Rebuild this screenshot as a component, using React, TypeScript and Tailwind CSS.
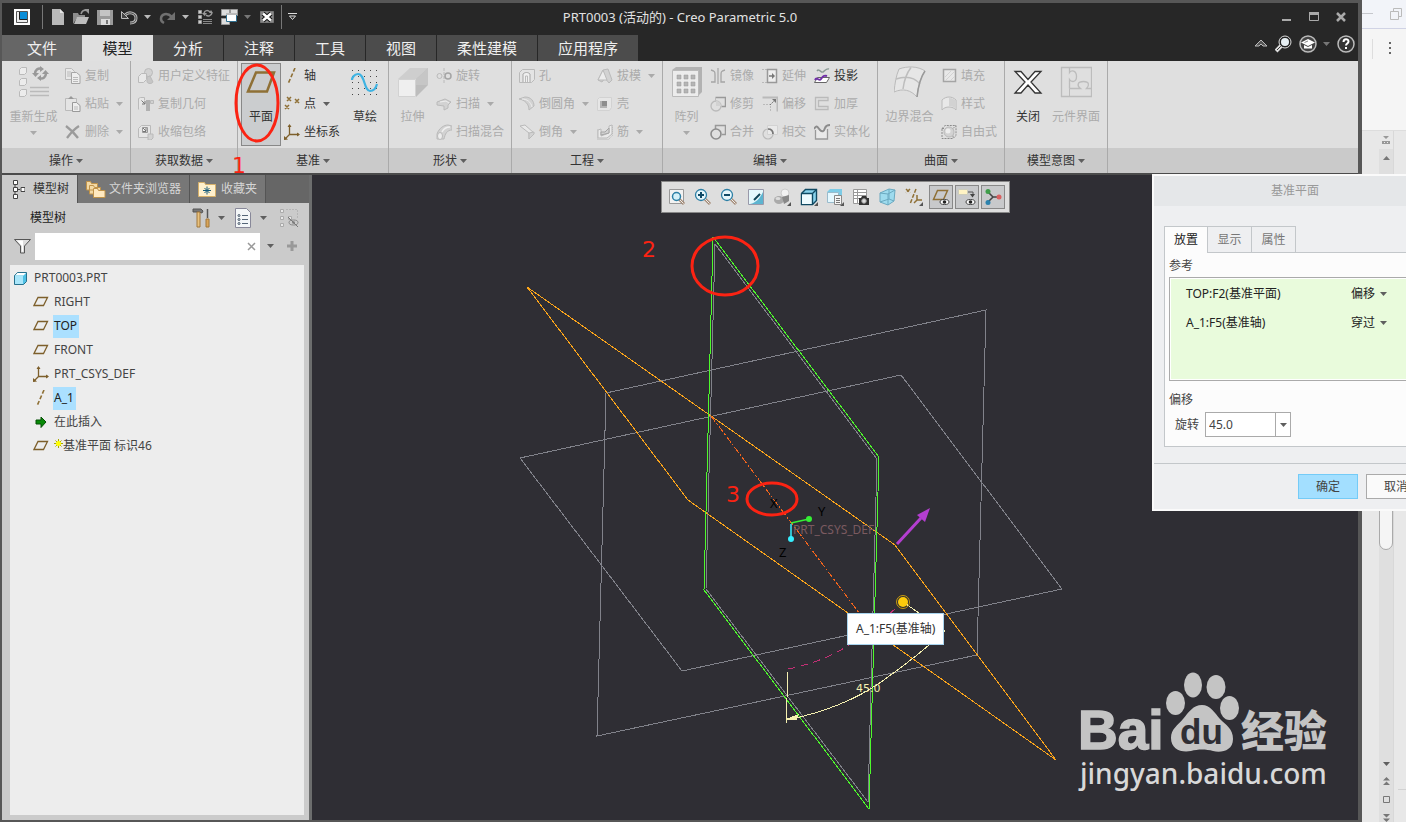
import type { ReactNode } from "react";
import clsx from "clsx";

function Svg({ w = 16, h = 16, children, className }: { w?: number; h?: number; children: ReactNode; className?: string }) {
  return (
    <svg width={w} height={h} viewBox={`0 0 ${w} ${h}`} fill="none" aria-hidden="true" className={clsx("shrink-0", className)}>
      {children}
    </svg>
  );
}

function Caret({ className = "text-[#5f5f5f]" }: { className?: string }) {
  return <Svg w={7} h={4} className={className}><path d="M0 0h7L3.5 4z" fill="currentColor" /></Svg>;
}

/* ---------- title bar ---------- */

const titleIcons = {
  logo: <Svg><path d="M0 0h16v16H0z" fill="#fff" /><path d="M2.5 2.5h11v11h-11z" fill="#eee" stroke="#555" /><path d="M6 3h7v7H6z" fill="#0b8ed8" /><path d="M5.5 3v7.5H13" stroke="#222" /></Svg>,
  new: <Svg w={14}><path d="M1 0h8l4 4v12H1z" fill="#b9b9b9" /><path d="M9 0l4 4H9z" fill="#e6e6e6" /></Svg>,
  open: <Svg><path d="M0 15V4h5l1 2h6v3H4z" fill="#8d8d8d" /><path d="M4 8h12l-3 7H1z" fill="#bdbdbd" /><path d="M8 5c1-3 3-4 5-3.500" stroke="#999" strokeWidth="1.500" /><path d="M11 0h5v5z" fill="#999" /></Svg>,
  save: <Svg><path d="M0 1h16v15H0z" fill="#9a9a9a" /><path d="M3 1h10v6H3z" fill="#c4c4c4" /><path d="M4 10h9v6H4z" fill="#dcdcdc" /><path d="M9 11h2v4H9z" fill="#777" /></Svg>,
  undo: <Svg w={17}><path d="M4 6c4-4 11-2 11 3 0 4-3 5-6 5" stroke="#b8b8b8" strokeWidth="3" /><path d="M4 6c4-4 11-2 11 3 0 4-3 5-6 5" stroke="#444" /><path d="M.5 2.500v7h7z" fill="#444" stroke="#bbb" /></Svg>,
  redo: <Svg w={17}><path d="M13 8C8 3 2 5 2 10c0 2 1 3 3 4" stroke="#707070" strokeWidth="2.500" /><path d="M16 3v8H8z" fill="#707070" /></Svg>,
  regen: <Svg><path d="M1.500 1.500h3v3h-3zM1.500 6.500h3v3h-3zM1.500 11.500h3v3h-3z" stroke="#999" fill="#ccc" /><path d="M6 10.500h9M6 12.500h9M6 14.500h9" stroke="#888" /><path d="M7 4c1-3 4-3 6-1M15 4c-1 3-4 4-6 2" stroke="#999" strokeWidth="1.500" /><path d="M5 4h5L7.500 7zM12 4h4l-2-3z" fill="#999" /></Svg>,
  window: <Svg w={17}><path d="M.5.5h8v6h-8zM9.500.5h7v6h-7zM.5 9.500h8v6h-8z" fill="#ddd" stroke="#999" /><path d="M5.500 4.500h10v8h-10z" fill="#fff" stroke="#2f6f8f" /><path d="M5 4h11v2H5z" fill="#bbb" /></Svg>,
  close: <Svg><path d="M1.500 2.500h13v11h-13z" fill="#888" stroke="#777" /><path d="M4 4.500l8 7M12 4.500l-8 7" stroke="#111" strokeWidth="4.500" /><path d="M4 4.500l8 7M12 4.500l-8 7" stroke="#fff" strokeWidth="2.500" /></Svg>,
};

function TitleBar() {
  return (
    <header className="grid h-8 grid-cols-[1fr_auto_1fr] items-center bg-[#272727] pb-1">
      <div className="flex items-center gap-2 pl-3">
        {titleIcons.logo}
        <div className="ml-1 h-6 w-px bg-[#777]" />
        <button aria-label="新建">{titleIcons.new}</button>
        <button aria-label="打开">{titleIcons.open}</button>
        <button aria-label="保存">{titleIcons.save}</button>
        <button aria-label="撤消" className="flex items-center gap-1.5">{titleIcons.undo}<Caret className="text-[#bbb]" /></button>
        <button aria-label="重做" className="flex items-center gap-1.5">{titleIcons.redo}<Caret className="text-[#bbb]" /></button>
        <button aria-label="重新生成">{titleIcons.regen}</button>
        <button aria-label="窗口" className="flex items-center gap-1.5">{titleIcons.window}<Caret className="text-[#777]" /></button>
        <div className="flex items-center gap-1.5">
          <button aria-label="关闭窗口">{titleIcons.close}</button>
          <div className="h-6 w-px bg-[#777]" />
          <button aria-label="自定义快速访问工具栏">
            <Svg w={9} h={8}><path d="M0 .5h9M1.500 3h6L4.500 6.500z" stroke="#ddd" /></Svg>
          </button>
        </div>
      </div>
      <h1 className="text-[13px] leading-5 text-[#e2e2e2]">PRT0003 (活动的) - Creo Parametric 5.0</h1>
      <div className="flex items-center justify-end gap-[17px] pr-3">
        <button aria-label="最小化"><Svg w={10} h={10}><path d="M0 8h9" stroke="#aaa" strokeWidth="2" /></Svg></button>
        <button aria-label="最大化"><Svg w={10} h={10}><path d="M.5.5h9v8h-9z" stroke="#aaa" /><path d="M0 0h10v3H0z" fill="#aaa" /></Svg></button>
        <button aria-label="关闭"><Svg w={10} h={10}><path d="M1 1l8 8M9 1L1 9" stroke="#aaa" strokeWidth="2.500" /></Svg></button>
      </div>
    </header>
  );
}

const ribbonTabs = ["分析", "注释", "工具", "视图", "柔性建模", "应用程序"];

function TabRow() {
  return (
    <nav className="flex h-[26px] bg-[#272727] text-[15px] leading-6 text-[#efefef]">
      <button className="w-20 bg-[#666]">文件</button>
      <button className="w-[71px] bg-[#e0e0e0] text-[#222]">模型</button>
      {ribbonTabs.map((tab) => (
        <button key={tab} className="border-r border-[#272727] bg-[#4c4c4c] px-5">{tab}</button>
      ))}
      <div className="ml-auto flex items-center gap-[7px] pr-[3px] pb-2">
        <button aria-label="折叠功能区"><Svg w={14} h={12}><path d="M1 8l6-6 6 6H9L7 6 5 8z" fill="#555" stroke="#bbb" /></Svg></button>
        <button aria-label="搜索">
          <Svg w={17} h={18}><path d="M1 16l5-5" stroke="#ddd" strokeWidth="4" /><path d="M2 15l4-4" stroke="#333" strokeWidth="1" /><circle cx="10" cy="7" r="6" fill="#222" stroke="#ddd" /><circle cx="10" cy="7" r="4" fill="#e6eef2" /></Svg>
        </button>
        <button aria-label="学习" className="flex items-center gap-1.5">
          <Svg w={18} h={18}><circle cx="9" cy="9" r="8" fill="#444" stroke="#bbb" strokeWidth="1.500" /><path d="M2 7.500L9 4l7 3.500L9 11z" fill="#fff" /><path d="M5 10v3.500h8V10l-4 2z" fill="#fff" /><path d="M5.500 7.500L9 6" stroke="#888" /></Svg>
          <Caret className="text-[#777]" />
        </button>
        <button aria-label="帮助">
          <Svg w={18} h={18}><circle cx="9" cy="9" r="8" fill="#333" stroke="#bbb" strokeWidth="1.500" /><path d="M6.500 7c0-3.500 5-3.500 5-.5 0 2-2.500 2-2.500 4M9 12v2" stroke="#fff" strokeWidth="2" /></Svg>
        </button>
      </div>
    </nav>
  );
}

/* ---------- ribbon icons ---------- */

const G = "#bababa";
const L = "#d2d2d2";
const BROWN = "#8f7036";

const icons: Record<string, ReactNode> = {
  copy: <Svg><path d="M.5.500h6l3 3v8h-9z" fill="#e8e8e8" stroke={G} /><path d="M2 4h4M2 6h4M2 8h4" stroke={G} /><path d="M6.500 4.500h5l3.500 3v8H6.500z" fill="#eee" stroke="#a5a5a5" /><path d="M8 9.500h5M8 11.500h5M8 13.500h5" stroke={G} /></Svg>,
  paste: <Svg><path d="M.5 2.500h11v12H.5z" fill="#e4e4e4" stroke={G} /><path d="M3 3l3-3 3 3z" fill="#999" /><path d="M7.500 6.500h4l3.500 3v6H7.500z" fill="#eee" stroke="#999" /><path d="M9 11h4M9 13h4" stroke={G} /></Svg>,
  delete: <Svg><path d="M1 2c4 3 9 8 12 12M14 2C9 5 5 10 2 14" stroke="#9b9b9b" strokeWidth="2.300" /></Svg>,
  udf: <Svg><circle cx="10.500" cy="4.500" r="4" fill={L} stroke={G} /><path d="M12 8l3 6c-1 2-5 2-6 0V9z" fill="#c6c6c6" stroke={G} /><path d="M.5 8.500l3-3h5v6l-3 3h-5z" fill="#e8e8e8" stroke={G} /></Svg>,
  copyGeom: <Svg><path d="M.5 13.500V2.500l2-1h4v3" fill="#e6e6e6" stroke={G} /><path d="M3.500 4.500l3.500 3.500M7 5v3H4" stroke="#777" /><path d="M8 4h4v11H8z" fill="#b0b0b0" /><path d="M12.500 4.500h3v3h-3z" fill={L} stroke={G} /></Svg>,
  shrink: <Svg><path d="M.5 4.500l3-3h9v9l-2 3H.5z" fill="#e6e6e6" stroke={G} /><path d="M4.500 3.500h5v5h-5z" fill="#eee" stroke="#999" /><path d="M5 4l3 3M8 4v3.500H5" stroke="#777" /><path d="M10 10h5v4l-2 2h-3z" fill={L} stroke={G} /></Svg>,
  axis: <Svg><path d="M11 0L4 16" stroke={BROWN} strokeWidth="1.600" strokeDasharray="4 2" /></Svg>,
  point: <Svg><path d="M3 1l4 4M7 1L3 5M11 3l4 4M15 3l-4 4M1 9l4 4M5 9l-4 4" stroke={BROWN} strokeWidth="1.500" /></Svg>,
  csys: <Svg><path d="M5.500 1v9.500H15M5.500 10.500L1 15" stroke="#7d5f2b" strokeWidth="1.300" /><path d="M3.500 3l2-3 2 3zM13 8.500l3 2-3 2zM0 16v-4l4 3.500z" fill="#7d5f2b" /></Svg>,
  revolve: <Svg><path d="M8 0v16" stroke={G} strokeDasharray="3 1" /><circle cx="3.500" cy="8" r="2.500" stroke={G} /><circle cx="12" cy="8" r="3" stroke="#a5a5a5" strokeWidth="1.500" /></Svg>,
  sweep: <Svg><path d="M1 6l8-3 6 3-3 3v3l-4 2v-4l-7-1z" fill={L} stroke={G} /><path d="M4 6l6-1 3 2" stroke="#eee" /></Svg>,
  sweptBlend: <Svg><path d="M1 10C3 4 8 1 12 1l4 1v4c-5 0-7 4-8 9H1z" fill={L} stroke={G} /><ellipse cx="4" cy="12" rx="2.500" ry="3.500" fill="#ededed" stroke={G} /><path d="M6 8c2-4 5-5 8-5" stroke="#f0f0f0" strokeWidth="1.500" /></Svg>,
  hole: <Svg><path d="M.5 4.500l3-3h12v10l-3 3H.5z" fill="#e4e4e4" stroke={G} /><path d="M4 14V6c2-2 5-2 7 0v8" fill="#f0f0f0" stroke="#a5a5a5" /><path d="M6.500 14V8h2v6" stroke={G} /></Svg>,
  round: <Svg><path d="M0 3l6-2c6 0 9 4 9 9l-5 4C10 8 6 4 0 3z" fill={L} stroke={G} /><path d="M3 3c5 0 9 3 10 8" stroke="#eee" /></Svg>,
  chamfer: <Svg><path d="M1 2l5-1 9 8-5 6V9z" fill="#e8e8e8" stroke={G} /><path d="M10 9v6l5-5V8z" fill={L} stroke={G} /></Svg>,
  draft: <Svg><path d="M1 12L6 2l5-1 4 11-3 3-4-5-3 4z" fill={L} stroke={G} /><path d="M6 2l4 10H1z" fill="#ececec" stroke={G} /></Svg>,
  shell: <Svg><path d="M.5 3.500l2-2h12v10l-2 3H.5z" fill="#e6e6e6" stroke={L} /><path d="M3 5h7v7H3z" fill="#b4b4b4" /><path d="M5 5h5v5H5z" fill="#8e8e8e" /></Svg>,
  rib: <Svg><path d="M.5 5.500v10h11l4-4v-10" stroke={G} strokeDasharray="1 1" /><path d="M4 12l8-3V2l3-1v9l-5 4H1V6l3-1z" fill="#eaeaea" stroke={G} /><path d="M4 11l8-2V4L8 8H4z" fill={L} stroke="#a5a5a5" /></Svg>,
  mirror: <Svg><path d="M8 0v16" stroke="#999" /><path d="M1 2c4 1 4 2 4 5v7H1M15 2c-4 1-4 2-4 5v7h4" stroke="#a5a5a5" strokeWidth="1.300" /></Svg>,
  trim: <Svg><path d="M5.500 1.500h10v9h-4" stroke="#999" strokeWidth="1.500" /><path d="M5.500 1.500v3" stroke={G} /><circle cx="6" cy="10" r="5" stroke={G} strokeWidth="1.300" /><path d="M6 5c3 0 5 2 5 5H6z" fill={L} /></Svg>,
  merge: <Svg><path d="M5.500 5V1.500h10v9H12" stroke="#999" strokeWidth="1.500" /><circle cx="6" cy="10" r="5" stroke="#8c8c8c" strokeWidth="1.600" /></Svg>,
  extend: <Svg><path d="M0 1.500h5M0 14.500h5" stroke={G} strokeDasharray="2 1" /><path d="M5.500 1.500h9v13h-9z" fill="#eee" stroke="#999" strokeWidth="1.500" /><path d="M7 8h3" stroke="#777" strokeWidth="1.500" /><path d="M10 5l3 3-3 3z" fill="#777" /></Svg>,
  offset: <Svg><path d="M.5 1.500h15v14" stroke={G} strokeWidth="2" /><path d="M1 8.500h7.500V16" stroke={G} strokeDasharray="2 1" /><path d="M8 9l5-5" stroke="#777" strokeDasharray="2 1" /><path d="M10 3h4v4z" fill="#777" /></Svg>,
  intersect: <Svg><path d="M5.500 1.500h10v9h-10z" fill="#e9e9e9" stroke={L} /><circle cx="6" cy="10" r="5" stroke={G} strokeWidth="1.200" /><path d="M6 5c3 0 5 2 5 5" stroke="#777" strokeWidth="1.700" /></Svg>,
  project: <Svg><path d="M3 3c2-3 4 2 6 1s3-4 6-3" stroke="#8a9a95" strokeWidth="1.400" /><path d="M.5 14.500l3-5h12l-3 5z" fill="#fff" stroke="#666" /><path d="M1 12c2-4 4 2 6-1s3-4 6-3" stroke="#7130a8" strokeWidth="2" /></Svg>,
  thicken: <Svg><path d="M14 4.500V1.500H1.500v12H14v-3H4.500v-6z" stroke={G} strokeWidth="1.300" /></Svg>,
  solidify: <Svg><path d="M1.500 6v9h12V5" fill="#e9e9e9" stroke="#999" strokeWidth="1.300" /><path d="M0 5c3-5 4-1 6 1s4 2 5-2c1-3 3-3 5-3" stroke="#8c8c8c" strokeWidth="2" /></Svg>,
  fill: <Svg><path d="M2.500 1.500h12v12h-12z" fill="#e8e8e8" stroke="#a5a5a5" strokeWidth="1.500" /><path d="M4 9l6-6M4 13l10-10M9 13l5-5" stroke={L} /></Svg>,
  style: <Svg><path d="M1 4c4-4 10-4 14 0v10c-3-4-11-4-14 0z" fill="#e8e8e8" stroke={G} /><path d="M8 2c4 0 6 2 7 3v8c-2-2-4-3-7-3z" fill={L} /></Svg>,
  freestyle: <Svg><path d="M1 4.500l3-3h11v10l-3 3H1zM1 4.500h11v10M12 4.500l3-3" stroke="#8c8c8c" strokeDasharray="2 1" /><circle cx="8" cy="8" r="5" fill={L} stroke={G} /><circle cx="7" cy="7" r="2.500" fill="#ededed" /></Svg>,
};

const bigIcons: Record<string, ReactNode> = {
  regenerate: <Svg w={30} h={32}><path d="M.5 3.500l2-2h5v5l-2 2h-5zM.5 14.500l2-2h5v5l-2 2h-5zM.5 25.500l2-2h5v5l-2 2h-5z" fill="#ececec" stroke={G} /><path d="M11 21.500h19M11 25.500h19M11 29.500h19" stroke={G} strokeWidth="1.500" /><path d="M16 8c0-4 3-6 6-5.500M27 7c0 4-3 6-6 5.500" stroke="#999" strokeWidth="2.500" /><path d="M13 7h7l-3.500 4zM23 8h7l-3.500-4zM21 0l4 3-4 3zM22 9l-4 3 4 3z" fill="#999" /></Svg>,
  plane: <Svg w={30} h={32}><path d="M10 6.500h18l-7 19H2z" stroke={BROWN} strokeWidth="2.500" /></Svg>,
  sketch: (
    <Svg w={30} h={32}>
      {[4, 10, 16, 22, 28].map((y) => <path key={y} d={`M2 ${y}.500h26`} stroke="#444" strokeDasharray="1 5" />)}
      <path d="M2 14c0-2 2-6 6-6 7 0 6 17 12 17 4 0 6-3 7-7" stroke="#3fb3e2" strokeWidth="2.200" />
    </Svg>
  ),
  extrude: <Svg w={30} h={32}><path d="M12 2h18L18 13H0z" fill="#cecece" /><path d="M30 2v17L18 31V13z" fill="#bdbdbd" /><path d="M18 13L30 2v17H18z" fill="#c6c6c6" /><path d="M.5 13.500h17v17H.5z" fill="#efefef" stroke={L} /></Svg>,
  pattern: (
    <Svg w={30} h={32}>
      <path d="M0 4l4-3h26v25l-4 4z" fill="#b2b2b2" />
      <path d="M.5 4.500h26v26H.5z" fill="#ececec" stroke={G} />
      {[9, 16, 23].map((y) => [5, 12, 19].map((x) => <path key={`${x}-${y}`} d={`M${x} ${y}h4v4h-4z`} fill="#b5b5b5" stroke="#999" strokeWidth=".5" />))}
    </Svg>
  ),
  boundary: <Svg w={32} h={32}><path d="M5 3C13 0 24 0 31 5c-5 7-7 17-8 26-6-7-14-9-23-5 1-9 2-16 5-23z" fill="#e6e6e6" stroke={G} /><path d="M17 1.500C12 8 10 15 9 23M2 13c9-3 18-2 24 5" stroke="#bdbdbd" strokeWidth="1.500" /><path d="M31 5c-5 7-7 17-8 26" stroke="#999" strokeWidth="1.500" /></Svg>,
  closeX: <Svg w={30} h={32}><path d="M2 5.500h6l7 8 7-8h6L18 16l10 11h-6l-7-8-7 8H2l10-11z" fill="#fff" stroke="#333" strokeWidth="1.300" /></Svg>,
  component: <Svg w={32} h={32}><path d="M1.500 1.500h30v29h-30z" stroke="#bcbcbc" strokeWidth="1.300" /><path d="M9.500 1.500v5c2-3 7-2 7 4s-5 6-7 3v9M9.500 22.500h11c-4-3-3-7 3-7s6 4 3 7h5" stroke="#bcbcbc" strokeWidth="1.300" /><path d="M9.500 22.500v8" stroke="#bcbcbc" /></Svg>,
};

type Item = { icon: string; label: string; menu?: boolean; on?: boolean };

function Big({ icon, label, menu, on, className }: Item & { className: string }) {
  return (
    <button disabled={!on} className={clsx("flex shrink-0 flex-col items-center", on ? "text-[#333]" : "text-[#ababab]", className)}>
      {bigIcons[icon]}
      <span className="mt-[9px] leading-5 whitespace-nowrap">{label}</span>
      {menu && <Caret className="mt-1 text-[#aaa]" />}
    </button>
  );
}

function Column({ items, className = "" }: { items: Item[]; className?: string }) {
  return (
    <div className={clsx("flex shrink-0 flex-col pt-px", className)}>
      {items.map((item) => (
        <button key={item.label} disabled={!item.on} className={clsx("flex h-7 items-center gap-1 whitespace-nowrap", item.on ? "text-[#333]" : "text-[#ababab]")}>
          {icons[item.icon]}
          <span>{item.label}</span>
          {item.menu && <Caret className={clsx("ml-[3px]", item.on ? "text-[#5f5f5f]" : "text-[#aaa]")} />}
        </button>
      ))}
    </div>
  );
}

function Group({ label, className, children }: { label: string; className: string; children: ReactNode }) {
  return (
    <section className={clsx("relative flex shrink-0 flex-col border-r border-[#aaa]", className)}>
      <div className="flex h-[87px]">{children}</div>
      <button className="flex h-[25px] items-center justify-center gap-[3px] bg-[#cacaca] text-[#333]">{label}<Caret /></button>
    </section>
  );
}

function Ribbon() {
  return (
    <div className="flex border-b-2 border-[#4b4b4b] bg-[#dfdfdf] text-xs">
      <Group label="操作" className="w-[129px]">
        <Big icon="regenerate" label="重新生成" menu className="w-[63px] pt-[5px]" />
        <Column items={[{ icon: "copy", label: "复制" }, { icon: "paste", label: "粘贴", menu: true }, { icon: "delete", label: "删除", menu: true }]} />
      </Group>
      <Group label="获取数据" className="w-[107px]">
        <Column className="pl-[7px]" items={[{ icon: "udf", label: "用户定义特征" }, { icon: "copyGeom", label: "复制几何" }, { icon: "shrink", label: "收缩包络" }]} />
      </Group>
      <Group label="基准" className="w-[151px]">
        <div className="flex px-[3px] py-0.5">
          <Big icon="plane" label="平面" on className="w-10 border border-[#888] bg-[#cbcdcf] pt-0.5" />
        </div>
        <Column className="w-[58px]" items={[{ icon: "axis", label: "轴", on: true }, { icon: "point", label: "点", menu: true, on: true }, { icon: "csys", label: "坐标系", on: true }]} />
        <Big icon="sketch" label="草绘" on className="w-[46px] pt-[5px]" />
        <svg width="56" height="116" viewBox="0 0 56 116" className="pointer-events-none absolute top-0 -left-2 z-10" fill="none">
          <ellipse cx="27" cy="42" rx="21" ry="38" stroke="#fb2313" strokeWidth="3" />
          <text x="2" y="112" fill="#fb2313" fontSize="22" fontFamily="DejaVu Sans, sans-serif">1</text>
        </svg>
      </Group>
      <Group label="形状" className="w-[123px]">
        <Big icon="extrude" label="拉伸" className="w-[47px] pt-[5px]" />
        <Column items={[{ icon: "revolve", label: "旋转" }, { icon: "sweep", label: "扫描", menu: true }, { icon: "sweptBlend", label: "扫描混合" }]} />
      </Group>
      <Group label="工程" className="w-[151px]">
        <Column className="w-[85px] pl-[7px]" items={[{ icon: "hole", label: "孔" }, { icon: "round", label: "倒圆角", menu: true }, { icon: "chamfer", label: "倒角", menu: true }]} />
        <Column items={[{ icon: "draft", label: "拔模", menu: true }, { icon: "shell", label: "壳" }, { icon: "rib", label: "筋", menu: true }]} />
      </Group>
      <Group label="编辑" className="w-[215px]">
        <Big icon="pattern" label="阵列" menu className="w-[47px] pt-[5px]" />
        <Column className="w-[52px]" items={[{ icon: "mirror", label: "镜像" }, { icon: "trim", label: "修剪" }, { icon: "merge", label: "合并" }]} />
        <Column className="w-[52px]" items={[{ icon: "extend", label: "延伸" }, { icon: "offset", label: "偏移" }, { icon: "intersect", label: "相交" }]} />
        <Column items={[{ icon: "project", label: "投影", on: true }, { icon: "thicken", label: "加厚" }, { icon: "solidify", label: "实体化" }]} />
      </Group>
      <Group label="曲面" className="w-[127px]">
        <Big icon="boundary" label="边界混合" className="w-[63px] pt-[5px]" />
        <Column items={[{ icon: "fill", label: "填充" }, { icon: "style", label: "样式" }, { icon: "freestyle", label: "自由式" }]} />
      </Group>
      <Group label="模型意图" className="w-[103px]">
        <Big icon="closeX" label="关闭" on className="w-[46px] pt-[5px]" />
        <Big icon="component" label="元件界面" className="w-[50px] pt-[5px]" />
      </Group>
      <div className="flex flex-1 flex-col justify-end"><div className="h-[25px] bg-[#cacaca]" /></div>
    </div>
  );
}

/* ---------- model tree ---------- */

const planeIcon = <Svg><path d="M5 3.500h9.500l-4 8H1z" stroke="#7d5f2b" strokeWidth="1.300" /></Svg>;

const treeItems: { icon: ReactNode; label: string; selected?: boolean; fresh?: boolean }[] = [
  { icon: planeIcon, label: "RIGHT" },
  { icon: planeIcon, label: "TOP", selected: true },
  { icon: planeIcon, label: "FRONT" },
  { icon: icons.csys, label: "PRT_CSYS_DEF" },
  { icon: icons.axis, label: "A_1", selected: true },
  { icon: <Svg><path d="M3 6h5V3l5 5-5 5.500V10H3z" fill="#088a08" stroke="#045004" /></Svg>, label: "在此插入" },
  { icon: planeIcon, label: "基准平面 标识46", fresh: true },
];

function Sidebar() {
  return (
    <aside className="flex w-[310px] shrink-0 flex-col border-r-[3px] border-[#6c6d6d] bg-[#cbcbcb] text-xs">
      <div className="flex h-7 bg-[#666] text-[#d5d5d5]">
        <button className="flex w-[76px] items-center gap-2 border-r border-[#555] bg-[#cbcbcb] pl-2 text-[#333]">
          <Svg w={15} h={20}><path d="M5 4v13M5 10.500h5" stroke="#444" /><path d="M3.500 1.500h4v4h-4zM3.500 8.500h4v4h-4zM3.500 15.500h4v4h-4zM11 8.500h4v4h-4z" fill="#fff" stroke="#444" /></Svg>
          模型树
        </button>
        <button className="flex w-28 items-center gap-[3px] border-r border-[#555] bg-[#777] pl-2">
          <Svg w={20} h={20}>
            <path d="M.5 11V2.500h4l1 2h6V11zM3.500 15V6.500h4l1 2h6V15z" fill="#f3d9a5" stroke="#c0934a" />
            <path d="M7.500 18.500v-9h4l1 2h6.500v7z" fill="#ffe9c0" stroke="#c0934a" />
          </Svg>
          文件夹浏览器
        </button>
        <button className="flex w-[76px] items-center gap-[5px] border-r border-[#555] bg-[#777] pl-2">
          <Svg w={18} h={18}><path d="M.5 16.500v-14h6l1 2h10v12z" fill="#fff0cd" stroke="#d6b06a" /><path d="M9 6.500v8M5 10.500h8M6.500 8l5 5M11.500 8l-5 5" stroke="#175b7a" /></Svg>
          收藏夹
        </button>
      </div>
      <div className="flex h-[29px] items-center pr-2.5 pl-7">
        <h2 className="text-[#222]">模型树</h2>
        <div className="ml-auto flex items-center gap-2">
          <button aria-label="设置" className="flex items-center gap-2">
            <Svg w={18} h={20}><path d="M1 1h8l2 2-1 2-3-1H1z" fill="#777" stroke="#555" /><path d="M5 4h3v15H5z" fill="#e9c27e" stroke="#a0763a" /><path d="M15.500 1v9" stroke="#555" strokeWidth="1.500" /><path d="M14 11h3v8h-3z" fill="#d9a55a" stroke="#a0763a" /></Svg>
            <Caret />
          </button>
          <button aria-label="显示" className="ml-0.5 flex items-center gap-2">
            <Svg w={17} h={20}><path d="M.5.5h11l4 4v15H.5z" fill="#f4f7f8" stroke="#889" /><path d="M7 7.500h6M7 11.500h6M7 15.500h6" stroke="#567" /><circle cx="4" cy="7.500" r="1" stroke="#456" /><circle cx="4" cy="11.500" r="1" stroke="#456" /><circle cx="4" cy="15.500" r="1" stroke="#456" /></Svg>
            <Caret />
          </button>
          <button aria-label="隐藏列" disabled className="ml-1">
            <Svg w={20} h={20}><path d="M1.500 1.500h3v3h-3zM1.500 8.500h3v3h-3zM1.500 15.500h3v3h-3zM9.500 8.500h3v3h-3z" fill="#e8e8e8" stroke="#aaa" /><path d="M7 1.500h11.500V11" stroke="#b5b5b5" strokeDasharray="2 1" /><ellipse cx="14.500" cy="14.500" rx="4.500" ry="2.500" stroke="#888" /><circle cx="14.500" cy="14.500" r="1.300" fill="#777" /><path d="M9 9l10 10" stroke="#777" /></Svg>
          </button>
        </div>
      </div>
      <div className="flex h-7 items-center pl-3">
        <Svg w={17} h={16}><path d="M.5 1.500h16L10.500 8v7h-4V8z" fill="#ddd" stroke="#555" /><path d="M3 2.500h6v11H8V8z" fill="#fff" /></Svg>
        <label className="ml-1 flex h-[27px] w-[225px] items-center bg-white pr-1">
          <input type="text" aria-label="筛选模型树" className="h-full min-w-0 flex-1 bg-transparent px-1 outline-none" />
          <Svg w={9} h={9}><path d="M1 1l7 7M8 1L1 8" stroke="#999" strokeWidth="1.500" /></Svg>
        </label>
        <button aria-label="筛选选项" className="ml-[7px]"><Caret /></button>
        <button aria-label="添加" className="ml-3"><Svg w={12} h={12}><path d="M6 1v10M1 6h10" stroke="#999" strokeWidth="3" /></Svg></button>
      </div>
      <div className="mx-2 mt-[5px] mr-[5px] mb-[5px] flex-1 bg-[#ededed] pt-px text-[#444]">
        <div className="flex h-6 items-center gap-[7px] pl-1">
          <Svg w={13} h={13}><path d="M.5 3.500l3-3h9v9l-3 3h-9z" fill="#4fc0e4" stroke="#27718d" /><path d="M1 4h8v8H1z" fill="#a9e6fa" /><path d="M1 3.500l2.500-2.500H12L9.500 3.500z" fill="#fff" /></Svg>
          PRT0003.PRT
        </div>
        <ul>
          {treeItems.map((item) => (
            <li key={item.label} className="flex h-6 items-center gap-1 pl-[23px]">
              {item.icon}
              <span className={clsx("flex h-[23px] items-center px-px", item.selected && "bg-[#abe0ff] pr-0.5 text-[#222]")}>
                {item.fresh && <Svg w={9} h={16}><path d="M4.500 1v9M0 5.500h9M1.500 2.500l6 6M7.500 2.500l-6 6" stroke="#a8a800" /><circle cx="4.500" cy="5.500" r="2.500" fill="#ff0" /></Svg>}
                {item.label}
              </span>
            </li>
          ))}
        </ul>
      </div>
    </aside>
  );
}

/* ---------- graphics window ---------- */

const corner = <path d="M18 14v4h-4z" fill="#555" />;
const eye = <><ellipse cx="12.500" cy="14" rx="4.500" ry="2.500" fill="#fff" stroke="#444" /><circle cx="12.500" cy="14" r="1.800" fill="#222" /></>;
const glass = <><path d="M11 11l5 5" stroke="#a58c78" strokeWidth="3" /><path d="M11 11l4.500 4.500" stroke="#eee" /></>;

const viewTools: { label: string; pressed?: boolean; art: ReactNode }[] = [
  { label: "重新调整", art: <><path d="M1.500 1.500h14v14h-14z" fill="#f2f2f2" stroke="#999" />{glass}<circle cx="8.500" cy="8.500" r="4" fill="#d5f0f8" stroke="#2d7fa5" strokeWidth="1.500" /></> },
  { label: "放大", art: <>{glass}<circle cx="7" cy="7" r="5.500" fill="#e6f6fb" stroke="#2d7fa5" strokeWidth="1.300" /><path d="M7 4v6M4 7h6" stroke="#114a66" strokeWidth="2" /></> },
  { label: "缩小", art: <>{glass}<circle cx="7" cy="7" r="5.500" fill="#e6f6fb" stroke="#2d7fa5" strokeWidth="1.300" /><path d="M4 7h6" stroke="#114a66" strokeWidth="2" /></> },
  { label: "重画", art: <><path d="M1.500 1.500h15v15h-15z" fill="#e5f8fc" stroke="#99a" /><path d="M3 16c6-1 10-6 13-12v12z" fill="#5cb4d0" /><path d="M7 12l6-6" stroke="#145" strokeWidth="2" /></> },
  { label: "着色", art: <><path d="M7 3l3-2h5l1 6-4 3H7z" fill="#ddd" /><circle cx="12" cy="5" r="4" fill="#f2f2f2" stroke="#ccc" /><ellipse cx="6" cy="12" rx="5" ry="4" fill="#aaa" /><path d="M9 9l7-2v6l-5 3z" fill="#888" /><ellipse cx="5" cy="10.500" rx="2.500" ry="1.500" fill="#ddd" />{corner}</> },
  { label: "显示样式", art: <><path d="M1.500 5.500l4-4h11v11l-4 4h-11z" fill="#8ad3ec" stroke="#104a63" strokeWidth="1.400" /><path d="M2 6h10v10H2z" fill="#eefbff" /><path d="M1.500 5.500h11v11M12.500 5.500l4-4" stroke="#104a63" strokeWidth="1.400" />{corner}</> },
  { label: "已保存方向", art: <><path d="M1 4l3-3h12v8L13 13H1z" fill="#7ccbe6" /><path d="M1.500 4.500h11v10h-11z" fill="#e5f8ff" stroke="#9bc" /><path d="M8.500 7.500h7v9h-7z" fill="#f5f5f5" stroke="#888" /><path d="M10 10.500h4M10 12.500h4M10 14.500h4" stroke="#777" />{corner}</> },
  { label: "视图管理器", art: <><path d="M1.500 1.500h13v14h-13zM5.500 1.500v14M1.500 4.500h13M1.500 7.500h13M1.500 10.500h13" fill="#fff" stroke="#999" /><path d="M7 10h2l1-2h4l1 2h2v7H7z" fill="#333" /><circle cx="12" cy="13" r="2.300" fill="#ddd" stroke="#999" /></> },
  { label: "透视图", art: <><path d="M1 5l9-4 6 1-1 11-6 4-8-3z" fill="#9edbee" stroke="#6ba9c0" /><path d="M1 5l8 1 7-4M9 6v11M10 1v10l-9 3M10 11l5 2" stroke="#6ba9c0" /></> },
  { label: "基准显示过滤器", art: <><path d="M1 1l4 4M5 1L1 5M11 1L5 16" stroke={BROWN} strokeWidth="1.500" strokeDasharray="4 1.500" /><path d="M12 7v5h5M12 12l-3 3" stroke={BROWN} strokeWidth="1.500" />{corner}</> },
  { label: "平面显示", pressed: true, art: <><path d="M5.500 2.500h10l-4 9H1.500z" stroke={BROWN} strokeWidth="1.500" />{eye}</> },
  { label: "注释显示", pressed: true, art: <><path d="M.5 1.500h9v5h-9z" fill="#fff3c4" stroke="#ccb" /><path d="M10 4h5v3" stroke="#555" /><path d="M12 6h5l-2.500 3.500z" fill="#444" />{eye}</> },
  { label: "旋转中心", pressed: true, art: <><path d="M4 4l5 5-5 5M9 9h6" stroke="#444" strokeWidth="1.500" /><circle cx="4" cy="3.500" r="2.500" fill="#3f9d4a" /><circle cx="4" cy="14.500" r="2.500" fill="#2c82ad" /><circle cx="15" cy="9" r="2.500" fill="#d96060" /></> },
];

function ModelView() {
  return (
    <svg width="1046" height="645" viewBox="312 175 1046 645" fill="none" className="absolute top-0 left-0" role="img" aria-label="三维模型视图">
      <g strokeWidth="1" shapeRendering="crispEdges">
        <g stroke="#81828a">
          <path d="M606 393L986 310L977 655L597 736Z" />
          <path d="M520 458L901 375L1062 589L682 671Z" />
          <path d="M715 244L877 459L868 802L706 589Z" />
        </g>
        <path d="M527 287L895 545L1056 760L688 500Z" stroke="#fba41a" />
        <path d="M713 237L879 457L869 809L704 590Z" stroke="#4df92b" />
        <path d="M711 416L866 622" stroke="#f2641c" strokeDasharray="7 2 2 2" />
      </g>

      <text x="793" y="534" fontSize="12" fill="#7b5a60">PRT_CSYS_DEF</text>
      <path d="M791 524v15" stroke="#36efff" strokeWidth="1.500" />
      <path d="M791 523l18-4" stroke="#35ef35" strokeWidth="1.500" />
      <circle cx="809" cy="519" r="3" fill="#35ef35" />
      <circle cx="791" cy="539" r="3" fill="#36efff" />
      <g fill="#000" fontSize="13"><text x="770" y="508">X</text><text x="818" y="516">Y</text><text x="779" y="557">Z</text></g>

      <path d="M897 544L921 518" stroke="#b43ed0" strokeWidth="3" />
      <path d="M930 508l-5 14-8-7z" fill="#b43ed0" />

      <g shapeRendering="crispEdges">
        <path d="M788 669Q823 662 849 645T897 607" stroke="#c22f74" strokeDasharray="7 6" />
        <g stroke="#f4efb0">
          <path d="M788 672L786 724" />
          <path d="M903 602L945 631Q918 656 881 682T787 720" />
          <path d="M787 719l11-4-2 5z" fill="#f4efb0" />
        </g>
      </g>
      <circle cx="903" cy="602" r="6.500" stroke="#c89b10" />
      <circle cx="903" cy="602" r="5" fill="#fccb0c" />
      <text x="856" y="692" fontSize="11" fill="#f4efb0" fontFamily="DejaVu Sans, sans-serif">45.0</text>

      <g stroke="#fb2313" strokeWidth="3">
        <ellipse cx="725" cy="266" rx="33" ry="29" />
        <ellipse cx="772" cy="499" rx="25" ry="16" />
      </g>
      <g fill="#fb2313" fontSize="22" fontFamily="DejaVu Sans, sans-serif"><text x="642" y="257">2</text><text x="726" y="502">3</text></g>

      <g fill="#c4c4c4">
        <text x="1078" y="749" fontSize="55" fontWeight="700" stroke="#c4c4c4" strokeWidth="1.500" fontFamily="Liberation Sans, sans-serif">Bai</text>
        <ellipse cx="1175.500" cy="703" rx="9.500" ry="12" />
        <ellipse cx="1193" cy="685" rx="9" ry="12.500" />
        <ellipse cx="1216" cy="687" rx="9.500" ry="12" />
        <ellipse cx="1229.500" cy="708" rx="9.500" ry="12" />
        <path d="M1202 705c8 0 13 8 18 14 6 6 13 10 13 20 0 12-12 14-20 12-7-2-15-2-22 0-10 2-20-2-20-13 0-9 7-13 12-19 6-7 10-14 19-14z" />
        <text x="1241" y="747" fontSize="43" fontWeight="900" fontFamily="Noto Sans CJK SC, sans-serif">经验</text>
        <text x="1080" y="784" fontSize="28" fontWeight="500" fill="#d8d8d8">jingyan.baidu.com</text>
      </g>
      <text x="1180" y="744" fontSize="35" fontWeight="700" fill="#2f2e34" fontFamily="Liberation Sans, sans-serif">du</text>
    </svg>
  );
}

function Canvas() {
  return (
    <main className="relative min-w-0 flex-1 overflow-hidden bg-[#2f2e34]">
      <ModelView />
      <div className="relative flex justify-center pt-1.5">
        <div className="flex h-8 w-[349px] items-center justify-between border border-[#888] bg-[#dedede] px-[3px]">
          {viewTools.map((tool) => (
            <button key={tool.label} aria-label={tool.label} className={clsx("grid size-6 place-items-center", tool.pressed && "border border-[#888] bg-[#c8c9cb]")}>
              <Svg w={18} h={18}>{tool.art}</Svg>
            </button>
          ))}
        </div>
      </div>
      <div role="tooltip" className="absolute top-[438px] left-[535px] flex h-8 items-center border border-[#a8d4ee] bg-white px-2 text-xs text-[#333]">A_1:F5(基准轴)</div>
    </main>
  );
}

/* ---------- datum plane dialog ---------- */

const references = [
  { name: "TOP:F2(基准平面)", type: "偏移" },
  { name: "A_1:F5(基准轴)", type: "穿过" },
];

function DatumDialog() {
  return (
    <div className="absolute top-[174px] right-0 z-20 w-[254px] overflow-hidden text-xs text-[#444]">
      <div role="dialog" aria-label="基准平面" className="w-[286px] border-2 border-[#fafafa] bg-[#eeeff1]">
        <h2 className="h-[30px] bg-[#e5e7e9] text-center leading-[30px] text-[#999]">基准平面</h2>
        <div className="mt-5 px-2.5">
          <div className="flex text-[#777]">
            <button className="z-10 h-[27px] w-11 border border-b-0 border-[#c3c7ca] bg-[#fcfcfc] text-[#222]">放置</button>
            <button className="h-[26px] w-11 border-t border-r border-[#c3c7ca]">显示</button>
            <button className="h-[26px] w-11 border-t border-r border-[#c3c7ca]">属性</button>
          </div>
          <div className="-mt-px h-[195px] border border-[#c3c7ca] bg-[#fcfcfc] pt-[3px] pl-1">
            <p className="leading-5">参考</p>
            <div className="mt-px h-[104px] border border-[#aaa] bg-white p-px">
              <div className="h-full bg-[#e9fbdc] pl-[15px] text-[#222]">
                {references.map((ref) => (
                  <div key={ref.name} className="flex h-[29px] items-center">
                    <span className="w-[165px]">{ref.name}</span>
                    <span className="relative flex items-center">
                      <select aria-label={ref.name} defaultValue={ref.type} className="w-10 appearance-none bg-transparent outline-none">
                        <option>{ref.type}</option>
                      </select>
                      <span className="pointer-events-none absolute right-1"><Caret /></span>
                    </span>
                  </div>
                ))}
              </div>
            </div>
            <p className="mt-[9px] leading-5">偏移</p>
            <div className="mt-0.5 flex items-center gap-1.5 pl-1.5">
              <label htmlFor="rotation">旋转</label>
              <div className="flex h-[25px] w-[86px] border border-[#aaa] bg-white">
                <input id="rotation" defaultValue="45.0" className="min-w-0 flex-1 px-[3px] outline-none" />
                <button aria-label="旋转历史" className="grid w-[15px] place-items-center border-l border-[#aaa]"><Caret /></button>
              </div>
            </div>
          </div>
        </div>
        <div className="mt-4 flex gap-2 border-t border-[#c3c7ca] py-2.5 pl-36">
          <button className="h-[25px] w-[60px] border border-[#74cbf7] bg-[#a3dfff]">确定</button>
          <button className="h-[25px] w-[60px] border border-[#aaa] bg-[#fafafa]">取消</button>
        </div>
      </div>
    </div>
  );
}

/* ---------- document window behind ---------- */

function BackWindow() {
  return (
    <div className="flex w-11 shrink-0 flex-col bg-[#e8e8e8]">
      <div className="flex h-[29px] items-center justify-between border-b border-[#d0d3e5] bg-[#f2f4f9] pr-1">
        <Svg w={11} h={12}><path d="M0 5.500h11" stroke="#c5c7cc" /></Svg>
        <Svg w={12} h={14}><path d="M3.500 4V1.500h8v8H9" stroke="#bbb" /><path d="M.5 4.500h8v8h-8z" stroke="#bbb" /></Svg>
      </div>
      <div className="h-[102px] border-b border-[#ddd] bg-[#f5f5f5] pt-2.5 pl-2.5">
        <Svg w={30} h={20}><path d="M.5 0v20" stroke="#ddd" /><path d="M17 3h2v2h-2zM17 8h2v2h-2zM17 13h2v2h-2z" fill="#666" /></Svg>
      </div>
      <div className="flex flex-1 pl-[17px]">
        <div className="flex w-[15px] flex-col items-center border-r border-[#d8d8d8] bg-[#dfdfdf]">
          <div className="grid h-[18px] w-full place-items-center bg-[#e8e8e8]"><Svg w={8} h={8}><path d="M1 0h6L4 3zM0 5h8v3H0z" fill="#999" /><path d="M2.500 6v1M5.500 6v1" stroke="#eee" /></Svg></div>
          <div className="grid h-[18px] place-items-center"><Svg w={7} h={4}><path d="M0 4h7L3.500 0z" fill="#777" /></Svg></div>
          <div className="mt-3 h-[371px] w-[14px] rounded-b-[7px] border border-[#aaa] bg-[#f5f5f5]" />
          <div className="mt-auto flex flex-col items-center gap-[11px] text-[#777]">
            <Caret />
            <Svg w={7} h={8}><path d="M0 3.500h7L3.500 0zM0 8h7L3.500 4.500z" fill="#777" /></Svg>
            <Svg w={7} h={7}><path d="M.5.5h6v6h-6z" stroke="#777" /></Svg>
            <Svg w={7} h={8}><path d="M0 0h7L3.500 3.500zM0 4.500h7L3.500 8z" fill="#777" /></Svg>
          </div>
        </div>
        <div className="ml-1 flex-1 self-end border-t border-[#d2d2d2] pt-8" />
      </div>
    </div>
  );
}

export default function App() {
  return (
    <div className="relative flex h-screen overflow-hidden font-['Noto_Sans','Noto_Sans_CJK_SC',sans-serif]">
      <div className="flex min-w-0 flex-1 flex-col border-t-[3px] border-r-4 border-b-2 border-l-2 border-[#575757]">
        <TitleBar />
        <TabRow />
        <Ribbon />
        <div className="flex min-h-0 flex-1">
          <Sidebar />
          <Canvas />
        </div>
      </div>
      <BackWindow />
      <DatumDialog />
    </div>
  );
}
